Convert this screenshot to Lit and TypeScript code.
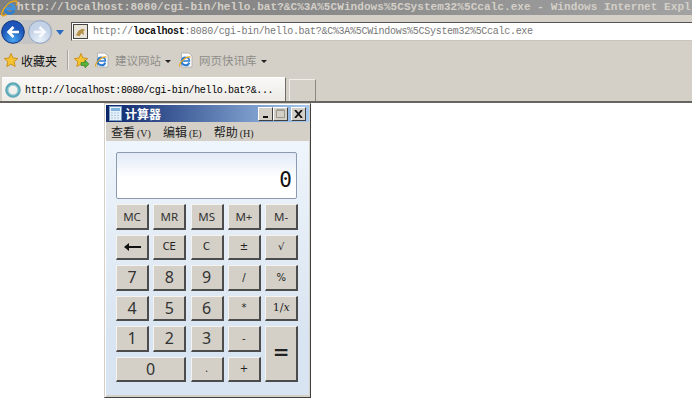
import { LitElement, html, css, svg } from "lit";
import { customElement } from "lit/decorators.js";

const URL = "http://localhost:8080/cgi-bin/hello.bat?&C%3A%5CWindows%5CSystem32%5Ccalc.exe";

const ieLogo = html`<svg class="logo" width="17" height="17" viewBox="0 0 17 17">
  <path d="M8.700 4a4.700 4.700 0 1 0 4.400 6.300" fill="none" stroke="#2f7fd0" stroke-width="2.800"/>
  <path d="M4.500 8.600h8.700a4.400 4.400 0 0 0-4.400-4.400" fill="none" stroke="#3d93e0" stroke-width="2.600"/>
  <path d="M3.800 7.500C6.500 3.800 11 .8 14.500 1c2 .2 2.200 2.200 1 4.500M5.500 14.300C3.300 16 1.400 16.300.8 15c-.6-1.500.8-4.400 3-7.500" fill="none" stroke="#e5a61c" stroke-width="1.500"/>
</svg>`;

const pageIe = html`<svg class="pageie" width="16" height="16" viewBox="0 0 16 16">
  <path d="M3.500 1H11l3 3v11H3.500z" fill="#fbfbfb" stroke="#a9a9a9" stroke-width=".8"/>
  <path d="M7.800 5.600a3.800 3.800 0 1 0 3.400 5" fill="none" stroke="#2a7ad0" stroke-width="2"/>
  <path d="M4.500 8.900h6.900a3.300 3.300 0 0 0-3.300-3.300" fill="none" stroke="#2a7ad0" stroke-width="1.500"/>
  <path d="M1.500 14.500C1 12 6 4.500 12.500 5" fill="none" stroke="#e6a71e" stroke-width="1.200"/>
</svg>`;

const star = svg`<path d="M8 1.500l2 4.500 4.800.5-3.600 3.200 1 4.800L8 12.100l-4.200 2.400 1-4.800L1.200 6.500 6 6z" fill="#f6c430" stroke="#c98a14" stroke-width=".9"/>`;

const nav = (bright: boolean) => {
  const stop = bright ? "#1d56b8" : "#c3d2e6";
  const edge = bright ? "#12357e" : "#92a5c0";
  const id = bright ? "b" : "f";
  return html`<svg width="24" height="24" viewBox="0 0 24 24">
    <defs><radialGradient id=${id} cx=".5" cy=".85" r=".8">
      <stop offset="0" stop-color=${bright ? "#49a4ee" : "#e6eff9"}/><stop offset=".7" stop-color=${stop}/>
    </radialGradient></defs>
    <circle cx="12" cy="12" r="11.300" fill="url(#${id})" stroke=${edge}/>
    <path d=${bright ? "M18 12H8M12.500 7l-5 5 5 5" : "M6 12H16M11.500 7l5 5-5 5"} fill="none" stroke=${bright ? "#fff" : "#f6f8fb"} stroke-width="2.600"/>
  </svg>`;
};

const rows: [string, string?][] = [
  ["MC", "s"], ["MR", "s"], ["MS", "s"], ["M+", "s"], ["M-", "s"],
  ["←", "arrow"], ["CE", "t"], ["C", "t"], ["±", "t"], ["√", "t"],
  ["7", "d"], ["8", "d"], ["9", "d"], ["/", "t"], ["%", "t"],
  ["4", "d"], ["5", "d"], ["6", "d"], ["*", "t"], ["1/x", "inv"],
  ["1", "d"], ["2", "d"], ["3", "d"], ["-", "t"], ["=", "eq"],
  ["0", "zero"], [".", "t"], ["+", "t"],
];

@customElement("app-root")
export class AppRoot extends LitElement {
  static styles = css`
    :host { display: block; position: relative; width: 692px; height: 415px; overflow: hidden; background: #fff; }
    .chrome { background: #d4d0c8; display: flex; flex-direction: column; border-bottom: 2px solid #66645f; box-sizing: border-box; height: 103px; }
    .title { height: 15px; background: linear-gradient(90deg, #808080 0%, #8b8b8b 50%, #a2a2a2 100%); display: flex; align-items: flex-start; white-space: nowrap; flex: none; }
    .logo { flex: none; margin: 0 -1px 0 1px; }
    .title span { font: bold 11px/15px "Liberation Mono", monospace; letter-spacing: 0.07px; color: #d4d0c8; }
    .navrow { height: 26px; margin-top: 4px; display: flex; align-items: center; flex: none; }
    .navbtns { display: flex; align-items: center; margin-left: 1px; gap: 3px; background: #c5c5c5; border-radius: 13px; height: 24px; flex: none; width: 52px; padding-right: 1px; box-sizing: border-box; }
    .drop { width: 0; height: 0; margin: 0 7px 0 3px; border: 4px solid transparent; border-top: 5px solid #2a6cc0; border-bottom: 0; flex: none; }
    .addr { flex: 1; height: 19px; margin-bottom: 1px; box-sizing: border-box; background: #fff; border-top: 1px solid #55534f; border-left: 1px solid #55534f; border-bottom: 1px solid #c9c5bc; display: flex; align-items: center; gap: 5px; padding-left: 1px; white-space: nowrap; overflow: hidden; }
    .favi { width: 15px; height: 15px; box-sizing: border-box; border: 1px solid #444; background: #e8e4da; flex: none; }
    .addr span { font: 10px "Liberation Mono", monospace; letter-spacing: -0.29px; color: #777; }
    .addr b { color: #111; font-weight: bold; }
    .favrow { height: 24px; margin-top: 3px; display: flex; align-items: center; flex: none; }
    .fav { display: flex; align-items: center; margin-left: 3px; gap: 2px; font: 12px "Noto Sans CJK SC", sans-serif; color: #111; }
    .sep { width: 1px; height: 20px; background: #a8a59e; margin: 0 4px 0 10px; border-right: 1px solid #efece6; }
    .link { display: flex; align-items: center; gap: 5px; font: 11.500px "Noto Sans CJK SC", sans-serif; color: #8f8d88; margin-left: 4px; }
    .link + .link { margin-left: 4px; }
    .caret { width: 0; height: 0; border: 3px solid transparent; border-top: 3px solid #222; border-bottom: 0; margin: 2px 3px 0 -1px; }
    .tabs { display: flex; align-items: flex-end; margin-top: 5px; height: 24px; padding-left: 2px; flex: none; }
    .tab { width: 284px; height: 24px; box-sizing: border-box; background: linear-gradient(#f9f8f6, #ecebe6); border-top: 1px solid #fff; border-right: 1px solid #6f6d68; display: flex; align-items: center; gap: 3px; padding: 1px 0 0 2px; white-space: nowrap; overflow: hidden; }
    .tab span { font: 10px "Liberation Mono", monospace; letter-spacing: -0.36px; color: #000; }
    .newtab { width: 27px; height: 22px; margin-left: 3px; box-sizing: border-box; border-top: 1px solid #f1efe9; border-left: 1px solid #f1efe9; border-right: 1px solid #8a8880; }

    .win { position: absolute; left: 104px; top: 103px; width: 207px; height: 295px; box-sizing: border-box; background: #d4d0c8; border: 1px solid; border-color: #d4d0c8 #404040 #404040 #d4d0c8; padding: 1px 1px 2px 1px; display: flex; flex-direction: column; box-shadow: inset 1px 1px 0 #fff; }
    .wt { height: 17px; background: linear-gradient(90deg, #0a246a, #a6caf0); display: flex; align-items: center; gap: 3px; padding: 0 3px 0 3px; flex: none; }
    .wt b { font: bold 12px "Noto Sans CJK SC", sans-serif; color: #fff; flex: 1; }
    .cap { width: 15px; height: 14px; box-sizing: border-box; background: #d4d0c8; border: 1px solid; border-color: #fff #404040 #404040 #fff; display: flex; align-items: center; justify-content: center; }
    .caps { display: flex; }
    .caps .cap:last-child { margin-left: 3px; }
    .menu { height: 19px; display: flex; align-items: center; gap: 12px; padding-left: 5px; font: 12px "Noto Sans CJK SC", sans-serif; color: #222; flex: none; }
    .menu i { font: normal 10px "Liberation Serif", serif; margin-left: 2px; }
    .client { flex: 1; background: linear-gradient(#eff5fc 0, #eaf1f9 40px, #d8e4f1 200px); padding: 11px 12px 0 10px; display: flex; flex-direction: column; gap: 5px; }
    .display { height: 47px; box-sizing: border-box; border: 1px solid #8c9bb0; border-radius: 2px; background: linear-gradient(#e2eaf7, #fff 55%); display: flex; align-items: flex-end; justify-content: flex-end; padding: 0 4px 6px 0; font: 21px "DejaVu Sans Mono", monospace; color: #111; }
    .keys { display: grid; grid-template-columns: repeat(5, 33px); grid-auto-rows: 25.500px; column-gap: 4.300px; row-gap: 5px; }
    .k { box-sizing: border-box; background: #d4d0c8; border-style: solid; border-width: 1px 2px 2px 1px; border-color: #f4f3f0 #4c4c4c #4c4c4c #f4f3f0; display: flex; align-items: center; justify-content: center; color: #333; font: 12px "Noto Sans", sans-serif; }
    .k.t { font: 10px "DejaVu Sans", sans-serif; color: #222; }
    .k.s { font-size: 11.500px; }
    .k.d, .k.zero { font-size: 16px; }
    .k.zero { grid-column: span 2; }
    .k.eq { grid-row: span 2; font: bold 20px "DejaVu Sans", sans-serif; color: #222; padding-bottom: 3px; }
    .k.inv { font: 11px "DejaVu Serif", serif; color: #222; }
    .k.inv i { font-style: italic; }
  `;

  private renderKey(label: string, kind?: string) {
    let inner: unknown = label;
    if (kind === "arrow") {
      inner = html`<svg width="17" height="8" viewBox="0 0 17 8"><path d="M0 4l5-4v3h12v2H5v3z" fill="#111"/></svg>`;
    } else if (kind === "inv") {
      inner = html`1/<i>x</i>`;
    }
    return html`<div class="k ${kind ?? ""}">${inner}</div>`;
  }

  render() {
    return html`
      <div class="chrome">
        <div class="title">${ieLogo}<span>${URL} - Windows Internet Expl</span></div>
        <div class="navrow">
          <div class="navbtns">${nav(true)}${nav(false)}</div>
          <div class="drop"></div>
          <div class="addr">
            <svg class="favi" viewBox="0 0 14 14"><path d="M2 11l3-5 4-2 3 1-2 2 1 4-3-2-2 3z" fill="#b5924c"/></svg>
            <span>http://<b>localhost</b>:8080/cgi-bin/hello.bat?&C%3A%5CWindows%5CSystem32%5Ccalc.exe</span>
          </div>
        </div>
        <div class="favrow">
          <div class="fav"><svg width="16" height="16" viewBox="0 0 16 16">${star}</svg>收藏夹</div>
          <div class="sep"></div>
          <svg width="17" height="16" viewBox="0 0 17 16">${star}<path d="M8 10.500h4v-2.500l4 4-4 4v-2.500H8z" fill="#55b23c" stroke="#2e7d22" stroke-width=".6"/></svg>
          <div class="link">${pageIe}建议网站<span class="caret"></span></div>
          <div class="link">${pageIe}网页快讯库<span class="caret"></span></div>
        </div>
        <div class="tabs">
          <div class="tab">
            <svg width="18" height="18" viewBox="0 0 18 18"><circle cx="9" cy="9" r="6.200" fill="none" stroke="#5fa8b8" stroke-width="3.200"/><circle cx="9" cy="9" r="5" fill="none" stroke="#a8dbe0" stroke-width="1"/></svg>
            <span>http://localhost:8080/cgi-bin/hello.bat?&...</span>
          </div>
          <div class="newtab"></div>
        </div>
      </div>
      <div class="win">
        <div class="wt">
          <svg width="13" height="15" viewBox="0 0 13 15"><rect x=".5" y=".5" width="12" height="14" fill="#e6f0f8" stroke="#7c9cc0"/><rect x="2" y="2" width="9" height="3" fill="#7fb2dc"/><path d="M2 7h9M2 9.500h9M2 12h9" stroke="#a9c7e2" stroke-width="1.200" stroke-dasharray="2 1"/></svg>
          <b>计算器</b>
          <div class="caps">
            <div class="cap"><svg width="8" height="8" viewBox="0 0 8 8"><path d="M1 6h5v2H1z" fill="#111"/></svg></div>
            <div class="cap"><svg width="10" height="9" viewBox="0 0 10 9"><path d="M.5 1.500h8v7h-8z" fill="none" stroke="#9a978f" stroke-width="1"/><path d="M.5 1h8" stroke="#9a978f" stroke-width="1.500"/></svg></div>
            <div class="cap"><svg width="9" height="8" viewBox="0 0 9 8"><path d="M1 0l7 8M8 0L1 8" fill="none" stroke="#111" stroke-width="1.800"/></svg></div>
          </div>
        </div>
        <div class="menu">
          <span>查看<i>(V)</i></span><span>编辑<i>(E)</i></span><span>帮助<i>(H)</i></span>
        </div>
        <div class="client">
          <div class="display">0</div>
          <div class="keys">${rows.map(([l, k]) => this.renderKey(l, k))}</div>
        </div>
      </div>
    `;
  }
}
